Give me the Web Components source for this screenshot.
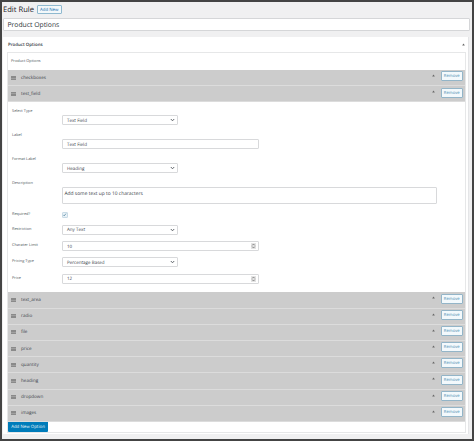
<!DOCTYPE html>
<html>
<head>
<meta charset="utf-8">
<title>Edit Rule</title>
<style>
    html, body { margin: 0; padding: 0; background: #f0f0f1; }
    body { font-family: "Open Sans", "Noto Sans", sans-serif; color: #3c434a; text-rendering: geometricPrecision; }
</style>
</head>
<body>
<rule-page>
    <option-row name="checkboxes"></option-row>
    <option-row name="test_field" open>
        <option-field label="Select Type" stacked><field-box kind="select" size="short">Text Field</field-box></option-field>
        <option-field label="Label" stacked><field-box size="mid">Text Field</field-box></option-field>
        <option-field label="Format Label" stacked><field-box kind="select" size="short">Heading</field-box></option-field>
        <option-field label="Description" stacked><field-box kind="area" size="long">Add some text up to 10 characters</field-box></option-field>
        <option-field label="Required?" tick></option-field>
        <option-field label="Restriction"><field-box kind="select" size="short">Any Text</field-box></option-field>
        <option-field label="Charater Limit"><field-box kind="number" size="mid">10</field-box></option-field>
        <option-field label="Pricing Type"><field-box kind="select" size="short">Percentage Based</field-box></option-field>
        <option-field label="Price"><field-box kind="number" size="mid">12</field-box></option-field>
    </option-row>
    <option-row name="text_area"></option-row>
    <option-row name="radio"></option-row>
    <option-row name="file"></option-row>
    <option-row name="price"></option-row>
    <option-row name="quantity"></option-row>
    <option-row name="heading"></option-row>
    <option-row name="dropdown"></option-row>
    <option-row name="images"></option-row>
</rule-page>

<script>
const caret = `<svg width="3" height="3" viewBox="0 0 3 3"><path d="M0.2 2.6 L1.5 0.5 L2.8 2.6 Z" fill="#666"/></svg>`;

class RulePage extends HTMLElement {
    constructor() {
        super();
        const shadowRoot = this.attachShadow({ mode: 'open' });
        shadowRoot.innerHTML = `
            <style>
                :host { display: block; width: 474px; height: 441px; box-sizing: border-box; border: 2px solid #444; background: #f0f0f1; overflow: hidden; }
                .head { display: flex; align-items: center; gap: 2.5px; height: 15px; padding-left: 1px; }
                h1 { margin: 0; font-size: 7.6px; font-weight: 400; color: #1d2327; line-height: 16px; }
                .add { box-sizing: border-box; height: 9.5px; padding: 0 2.5px; font-size: 4.4px; line-height: 8.5px; border: 1px solid #8fb9cf; border-radius: 1px; background: #f3f8fa; color: #2271b1; }
                .title { box-sizing: border-box; height: 13px; margin: .5px 2px 0 1px; padding-left: 3.5px; font-size: 6.8px; line-height: 12px; color: #2c3338; background: #fff; border: 1px solid #d5d6d8; border-radius: 1px; }
                .panel { box-sizing: border-box; height: 397px; margin: 6.5px 3px 0 1px; background: #fff; border-right: 1px solid #e4e5e7; padding: 0 2px 0 4px; }
                .panel-head { display: flex; align-items: center; justify-content: space-between; height: 15px; padding: 0 1px; font-size: 4.4px; font-weight: 600; color: #2c3338; }
                .box { box-sizing: border-box; height: 380.5px; border: 1px solid #e6e7e8; }
                .box-label { height: 17px; padding-left: 3px; font-size: 3.9px; line-height: 18px; color: #50575e; }
                .new { box-sizing: border-box; width: 40px; height: 10px; background: #007cba; color: #e8f3f9; font-size: 4.4px; line-height: 11px; text-align: center; border-radius: 0 0 1px 1px; }
            </style>
            <div class="head"><h1>Edit Rule</h1><div class="add">Add New</div></div>
            <div class="title">Product Options</div>
            <div class="panel">
                <div class="panel-head"><span>Product Options</span>${caret}</div>
                <div class="box">
                    <div class="box-label">Product Options</div>
                    <slot></slot>
                    <div class="new">Add New Option</div>
                </div>
            </div>
        `;
    }
}

class OptionRow extends HTMLElement {
    constructor() {
        super();
        const shadowRoot = this.attachShadow({ mode: 'open' });
        shadowRoot.innerHTML = `
            <style>
                :host { display: block; }
                .bar { box-sizing: border-box; display: flex; align-items: center; height: 16.2px; padding: 0 2px 1px 3px; background: #ccc; border-bottom: 1px solid #dcdcdc; }
                .grip { width: 5px; height: 4px; margin: 1px 4px 0 0; background: repeating-linear-gradient(#8a8a8a 0 1px, #a0a0a0 1px 1.5px); }
                .name { flex: 1; font-size: 4.6px; line-height: 8px; margin-top: 1px; color: #3c434a; padding-left: 1px; }
                .caret { display: flex; margin-right: 6px; margin-top: -3px; }
                .remove { box-sizing: border-box; width: 22.5px; height: 10px; margin-bottom: 1.5px; text-align: center; font-size: 4.2px; line-height: 9px; border: 1px solid #93b5c8; border-radius: 1px; background: #f3f9fc; color: #4a8bb0; }
                .body { display: none; height: 190px; box-sizing: border-box; padding-top: 5px; background: #fff; }
                :host([open]) .body { display: block; }
            </style>
            <div class="bar">
                <span class="grip"></span>
                <span class="name"></span>
                <span class="caret">${caret}</span>
                <span class="remove">Remove</span>
            </div>
            <div class="body"><slot></slot></div>
        `;
        shadowRoot.querySelector('.name').textContent = this.getAttribute('name');
    }
}

class OptionField extends HTMLElement {
    constructor() {
        super();
        const shadowRoot = this.attachShadow({ mode: 'open' });
        shadowRoot.innerHTML = `
            <style>
                :host { display: block; padding-left: 4px; font-size: 3.9px; color: #50575e; }
                :host([tick]) { margin-top: -1px; }
                .wrap { display: grid; grid-template-columns: 50px 1fr; align-items: center; height: 16.2px; }
                :host([tick]) .wrap { height: 13px; }
                .lab { line-height: 8px; }
                :host([stacked]) .wrap { display: block; height: auto; }
                :host([stacked]) .lab { display: block; height: 8px; line-height: 10px; }
                :host([stacked]) .ctl { padding-left: 50px; padding-bottom: 6px; }
                .tick { box-sizing: border-box; width: 5.5px; height: 6px; border: 1px solid #c9dbe6; background: #e9f2f7; display: flex; border-radius: 1px; }
            </style>
            <div class="wrap"><span class="lab"></span><div class="ctl"><slot></slot></div></div>
        `;
        shadowRoot.querySelector('.lab').textContent = this.getAttribute('label');
        if (this.hasAttribute('tick')) {
            shadowRoot.querySelector('.ctl').innerHTML = `<div class="tick"><svg width="4" height="4" viewBox="0 0 4 4"><path d="M0.2 1.8 L1.4 3 L3.4 0.4" fill="none" stroke="#4a7f9e" stroke-width="0.8"/></svg></div>`;
        }
    }
}

class FieldBox extends HTMLElement {
    constructor() {
        super();
        const shadowRoot = this.attachShadow({ mode: 'open' });
        const kind = this.getAttribute('kind');
        let extra = '';
        if (kind === 'select') {
            extra = `<svg width="5" height="4" viewBox="0 0 5 4"><path d="M0.8 1 L2.5 2.8 L4.2 1" fill="none" stroke="#50575e" stroke-width="0.9"/></svg>`;
        } else if (kind === 'number') {
            extra = `<svg width="5" height="6" viewBox="0 0 5 6"><rect width="5" height="6" fill="#e3e3e3"/><path d="M1.2 2.4 L2.5 1 L3.8 2.4 M1.2 3.6 L2.5 5 L3.8 3.6" fill="none" stroke="#666" stroke-width="0.7"/></svg>`;
        }
        shadowRoot.innerHTML = `
            <style>
                :host { display: block; box-sizing: border-box; height: 10px; border: 1px solid #d8d9db; border-radius: 1px; background: #fff; font-size: 4.5px; color: #3c434a; }
                :host([size="short"]) { width: 116px; }
                :host([size="mid"]) { width: 197px; }
                :host([size="long"]) { width: 375px; }
                :host([kind="area"]) { height: 16.5px; font-size: 4.9px; }
                .in { display: flex; justify-content: space-between; align-items: center; height: 100%; padding: 0 2.5px 0 4px; }
                .in span { line-height: 8px; margin-top: 1px; }
                :host([kind="area"]) .in { align-items: flex-start; padding: 1px 0 0 1.5px; }
            </style>
            <div class="in"><span><slot></slot></span>${extra}</div>
        `;
    }
}

customElements.define('rule-page', RulePage);
customElements.define('option-row', OptionRow);
customElements.define('option-field', OptionField);
customElements.define('field-box', FieldBox);
</script>
</body>
</html>
